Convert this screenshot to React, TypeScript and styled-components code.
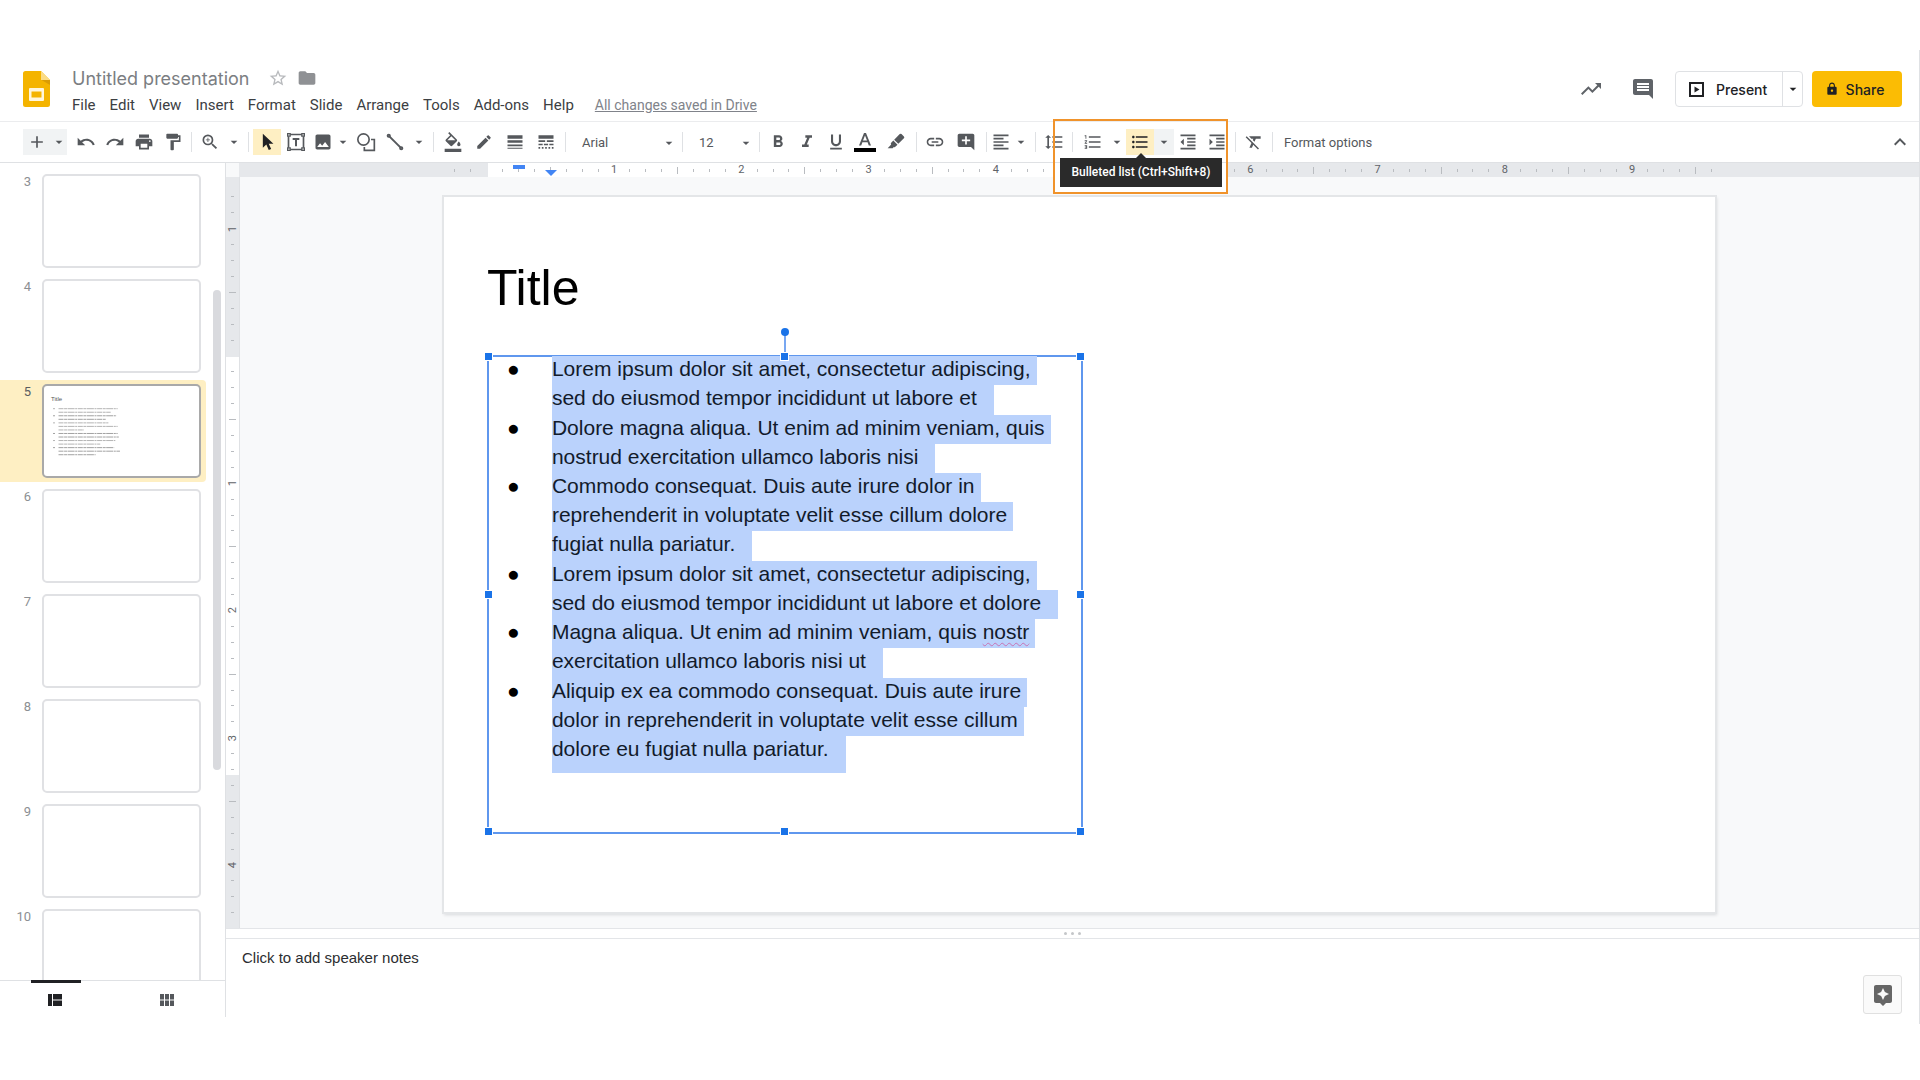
import React from "react";
import styled, { createGlobalStyle, css } from "styled-components";
import {
  MdAdd, MdUndo, MdRedo, MdPrint, MdFormatPaint, MdZoomIn, MdArrowDropDown, MdImage,
  MdFormatColorFill, MdEdit, MdLineWeight, MdLineStyle, MdFormatBold, MdFormatItalic,
  MdFormatUnderlined, MdLink, MdAddComment, MdFormatAlignLeft, MdFormatLineSpacing,
  MdFormatListNumbered, MdFormatListBulleted, MdFormatIndentDecrease, MdFormatIndentIncrease,
  MdFormatClear, MdKeyboardArrowUp, MdTrendingUp, MdComment, MdLock, MdStarBorder, MdFolder,
  MdAssistant,
} from "react-icons/md";

const ink = "#55585c";
const line = "#dfe1e4";
const rulerGray = "#e6e8eb";
const blue = "#1a73e8";
const ui = `Roboto, "Liberation Sans", sans-serif`;
const display = `Inter, Roboto, sans-serif`;

const Global = createGlobalStyle`
  *, *::before, *::after { box-sizing: border-box; }
  body { margin: 0; background: #fff; font-family: ${ui}; color: #202124; }
  button, input, select, textarea { font: inherit; color: inherit; border: 0; background: none; padding: 0; margin: 0; outline: 0; }
  button, select { cursor: pointer; }
  h1, h2, p, ul, ol { margin: 0; padding: 0; font-weight: 400; list-style: none; }
  svg { display: block; flex: none; }
`;

const Shell = styled.div`
  display: flex;
  flex-direction: column;
  height: calc(100vh - 106px);
  min-height: 640px;
  margin-top: 50px;
  border-right: 1px solid ${line};
`;

/* Header */
const Header = styled.header`
  display: flex;
  height: 72px;
  padding: 0 17px 0 23px;
  border-bottom: 1px solid #ebecee;
`;
const Logo = styled.svg`
  width: 27px;
  height: 36px;
  margin: 21px 22px 0 0;
`;
const DocInfo = styled.div`
  padding-top: 15px;
`;
const TitleRow = styled.div`
  display: flex;
  align-items: center;
  height: 26px;
  color: #8f9194;
`;
const DocTitle = styled.input`
  width: 196px;
  font-family: ${display};
  font-size: 18px;
  color: #7b7e82;
`;
const IconButton = styled.button`
  display: flex;
  margin-right: 9px;
`;
const Menu = styled.nav`
  display: flex;
  align-items: center;
  gap: 14px;
  height: 28px;
  font-size: 15px;
  color: #3c4043;
`;
const MenuItem = styled.button`
  white-space: nowrap;
`;
const SavedLink = styled.a`
  margin-left: 7px;
  font-size: 14px;
  color: #80838a;
  white-space: nowrap;
`;
const Actions = styled.div`
  display: flex;
  align-items: center;
  height: 36px;
  margin: 21px 0 0 auto;
`;
const HeaderIcon = styled.button`
  display: flex;
  margin-right: 28px;
  color: #5f6368;
`;
const PresentGroup = styled.div`
  display: flex;
  height: 36px;
  margin: 0 9px 0 -8px;
  border: 1px solid ${line};
  border-radius: 4px;
  font-family: ${display};
  font-size: 14px;
  font-weight: 500;
`;
const Present = styled.button`
  display: flex;
  align-items: center;
  gap: 12px;
  width: 106px;
  padding-left: 13px;
`;
const PresentMore = styled.button`
  display: flex;
  align-items: center;
  justify-content: center;
  width: 20px;
  border-left: 1px solid ${line};
`;
const Share = styled.button`
  display: flex;
  align-items: center;
  justify-content: center;
  gap: 7px;
  width: 90px;
  height: 36px;
  padding-right: 5px;
  border-radius: 4px;
  background: #fbbc04;
  font-family: ${display};
  font-size: 14px;
  font-weight: 500;
`;

/* Toolbar */
const Toolbar = styled.div`
  display: flex;
  align-items: center;
  height: 41px;
  flex: none;
  padding: 0 7px 0 23px;
  border-bottom: 1px solid ${line};
  color: ${ink};
`;
const Tool = styled.button<{ $w?: number; $on?: boolean }>`
  display: flex;
  align-items: center;
  justify-content: center;
  flex: none;
  width: ${(p) => p.$w ?? 28}px;
  height: 26px;
  & + & { margin-left: 1px; }
  ${(p) => p.$on && css`background: #feefc3; color: #202124;`}
`;
const Caret = styled.button<{ $w?: number; $fill?: boolean }>`
  display: flex;
  align-items: center;
  justify-content: center;
  flex: none;
  width: ${(p) => p.$w ?? 16}px;
  height: 26px;
  background: ${(p) => (p.$fill ? "#f1f3f4" : "none")};
  & + ${Tool} { margin-left: 1px; }
`;
const NewSlide = styled.div`
  display: flex;
  margin-right: 5px;
  background: #f1f3f4;
`;
const Sep = styled.span`
  flex: none;
  width: 1px;
  height: 20px;
  margin: 0 4px;
  background: ${line};
`;
const Picker = styled.div<{ $w: number }>`
  position: relative;
  flex: none;
  width: ${(p) => p.$w}px;
  svg { position: absolute; right: 1px; top: 6px; pointer-events: none; }
`;
const PickerSelect = styled.select`
  appearance: none;
  width: 100%;
  height: 26px;
  padding-left: 12px;
  font-size: 13px;
`;
const FormatOptions = styled.button`
  padding-left: 7px;
  font-size: 13px;
  white-space: nowrap;
`;
const Collapse = styled.button`
  display: flex;
  margin-left: auto;
`;
const BulletTool = styled.div`
  position: relative;
  display: flex;
  margin-left: 1px;
`;
const Callout = styled.div`
  position: absolute;
  z-index: 5;
  left: -73px;
  top: -10px;
  width: 175px;
  height: 75px;
  padding: 37px 4px 0 5px;
  border: 2px solid #f0932b;
  background: linear-gradient(transparent 42px, #fff 42px);
  pointer-events: none;
`;
const Tooltip = styled.div`
  position: relative;
  height: 29px;
  background: #2a2a2a;
  color: #fff;
  font-size: 12px;
  font-weight: 500;
  line-height: 29px;
  text-align: center;
  white-space: nowrap;
  &::before {
    content: "";
    position: absolute;
    left: 50%;
    top: -5px;
    margin-left: -5px;
    border: 5px solid transparent;
    border-top: 0;
    border-bottom-color: #2a2a2a;
  }
`;

/* Body */
const Body = styled.div`
  display: flex;
  flex: 1;
  min-height: 0;
`;
const Side = styled.aside`
  display: flex;
  flex-direction: column;
  position: relative;
  flex: none;
  width: 226px;
  margin-bottom: 7px;
  border-right: 1px solid ${line};
`;
const Film = styled.ol`
  flex: 1;
  min-height: 0;
  padding-top: 7px;
  overflow: hidden;
`;
const FilmItem = styled.li<{ $on?: boolean }>`
  display: flex;
  gap: 11px;
  width: 206px;
  margin-bottom: 3px;
  padding: 4px 5px 4px 0;
  background: ${(p) => (p.$on ? "#feefc3" : "none")};
  border-radius: 0 4px 4px 0;
  color: ${(p) => (p.$on ? "#5a5c60" : "#8c8f93")};
`;
const FilmNumber = styled.span`
  width: 31px;
  font-size: 13px;
  line-height: 15px;
  text-align: right;
`;
const Thumb = styled.button<{ $on?: boolean }>`
  flex: 1;
  height: 94px;
  border: 2px solid ${(p) => (p.$on ? "#a9a9a9" : "#e0e1e4")};
  border-radius: 5px;
  background: #fff;
  overflow: hidden;
`;
const ScrollThumb = styled.div`
  position: absolute;
  right: 4px;
  top: 127px;
  width: 8px;
  height: 480px;
  border-radius: 4px;
  background: #d9dade;
`;
const Views = styled.div`
  display: flex;
  height: 37px;
  padding-right: 1px;
  border-top: 1px solid ${line};
`;
const ViewButton = styled.button<{ $on?: boolean }>`
  display: flex;
  align-items: center;
  justify-content: center;
  flex: 1;
  padding: 2px 3px 0 0;
  color: ${(p) => (p.$on ? "#202124" : ink)};
  position: relative;
  ${(p) => p.$on && css`
    &::before {
      content: "";
      position: absolute;
      top: -1px;
      left: 50%;
      width: 50px;
      height: 3px;
      margin-left: -25px;
      background: #202124;
    }
  `}
`;
const Main = styled.main`
  display: flex;
  flex-direction: column;
  flex: 1;
  min-width: 0;
`;
const HRuler = styled.div`
  display: flex;
  flex: none;
  height: 14px;
  background: linear-gradient(90deg, #f8f9fa 13px, ${rulerGray} 13px 262px, #fff 262px 854px, ${rulerGray} 854px);
`;
const HMarks = styled.div`
  position: relative;
  display: flex;
  flex: 1;
  margin: 0 199px 0 221px;
`;
const HCell = styled.span`
  display: flex;
  flex: 1 1 0;
  width: 0;
  align-items: center;
  justify-content: center;
  font-size: 11px;
  line-height: 14px;
  color: #5f6368;
`;
const HTick = styled.i<{ $tall?: boolean }>`
  width: 1px;
  height: ${(p) => (p.$tall ? 7 : 3)}px;
  background: #b9bcc0;
`;
const FirstLine = styled.i`
  position: absolute;
  left: 66px;
  top: 2px;
  width: 12px;
  height: 4px;
  background: #4285f4;
`;
const LeftIndent = styled.i`
  position: absolute;
  left: 98px;
  top: 7px;
  border: 6px solid transparent;
  border-bottom: 0;
  border-top-color: #4285f4;
`;
const Stage = styled.div`
  display: flex;
  flex: 1;
  min-height: 0;
`;
const VRuler = styled.div`
  display: flex;
  flex-direction: column;
  flex: none;
  width: 14px;
  padding: 12px 0 7px;
  border-right: 1px solid ${line};
  background: linear-gradient(${rulerGray} 180px, #fff 180px 598px, ${rulerGray} 598px);
`;
const VCell = styled.span`
  display: flex;
  flex: 1 1 0;
  height: 0;
  align-items: center;
  justify-content: center;
  font-size: 11px;
  line-height: 13px;
  color: #5f6368;
`;
const VTick = styled.i<{ $tall?: boolean }>`
  height: 1px;
  width: ${(p) => (p.$tall ? 7 : 3)}px;
  background: #b9bcc0;
`;
const VNumber = styled.span`
  writing-mode: vertical-rl;
  transform: rotate(180deg);
`;
const Canvas = styled.div`
  display: flex;
  justify-content: center;
  flex: 1;
  min-width: 0;
  padding: 20px 0 16px;
  background: #f8f9fa;
`;
const Slide = styled.section`
  height: 100%;
  aspect-ratio: 16 / 9;
  padding: 63px 0 0 43px;
  background: #fff;
  box-shadow: 0 0 0 2px #e4e6e8, 1px 2px 3px 1px #d8dadd;
  font-family: "Liberation Sans", Arial, sans-serif;
  color: #000;
`;
const SlideTitle = styled.h1`
  font-size: 50px;
  line-height: 56px;
`;
const TextFrame = styled.div`
  position: relative;
  width: 596px;
  height: 479px;
  margin-top: 39px;
  border: 2px solid #5f97ee;
`;
const Handle = styled.i<{ $x: number; $y: number }>`
  position: absolute;
  left: ${(p) => p.$x}%;
  top: ${(p) => p.$y}%;
  width: 9px;
  height: 9px;
  margin: -5px 0 0 -5px;
  border: 1px solid #fff;
  background: ${blue};
`;
const RotateStem = styled.i`
  position: absolute;
  left: 50%;
  top: -26px;
  width: 2px;
  height: 22px;
  margin-left: -1px;
  background: #78a7f1;
  &::before {
    content: "";
    position: absolute;
    left: -3px;
    top: -3px;
    width: 8px;
    height: 8px;
    border-radius: 50%;
    background: ${blue};
  }
`;
const Bullets = styled.ul`
  margin-top: -1px;
  font-size: 21px;
  line-height: 25px;
`;
const Bullet = styled.li`
  display: flex;
  &::before {
    content: "●";
    width: 63px;
    padding-left: 18px;
  }
`;
const Line = styled.span<{ $end?: boolean }>`
  display: block;
  width: fit-content;
  padding: 0 ${(p) => (p.$end ? 17 : 6)}px 4px 0;
  background: #bad2fc;
  color: #121b2b;
  white-space: nowrap;
  ${Bullet}:nth-child(odd) &:last-child { padding-bottom: 5px; }
  ${Bullet}:last-child &:last-child { padding-bottom: 12px; }
`;
const Typo = styled.span`
  text-decoration: underline wavy #c873b4 1px;
  text-underline-offset: 3px;
`;
const Splitter = styled.div`
  display: flex;
  align-items: center;
  justify-content: center;
  gap: 4px;
  flex: none;
  height: 11px;
  border: solid #e3e5e8;
  border-width: 1px 0;
`;
const Dot = styled.i`
  width: 3px;
  height: 3px;
  border-radius: 50%;
  background: #c4c6c9;
`;
const NotesArea = styled.div`
  display: flex;
  align-items: flex-start;
  flex: none;
  height: 85px;
  padding: 0 17px 0 16px;
`;
const Notes = styled.textarea`
  flex: 1;
  height: 60px;
  padding-top: 9px;
  resize: none;
  font-family: "Liberation Sans", Arial, sans-serif;
  font-size: 15px;
  line-height: 20px;
  &::placeholder { color: #2b2d30; opacity: 1; }
`;
const Explore = styled.button`
  display: flex;
  align-items: center;
  justify-content: center;
  width: 39px;
  height: 39px;
  margin-top: 36px;
  border: 1px solid #e0e0e0;
  border-radius: 3px;
  background: #fafafa;
  color: #666;
`;

const I = 20;
const Arrow = () => <MdArrowDropDown size={16} />;

const Stroke = ({ children }: { children: React.ReactNode }) => (
  <svg width={I} height={I} viewBox="0 0 24 24" fill="none" stroke="currentColor" strokeWidth="2">{children}</svg>
);
const PointerIcon = () => (
  <svg width={I} height={I} viewBox="0 0 24 24" fill="currentColor"><path d="M7 2v17l4.2-3.9 2.9 6.5 2.9-1.3-2.9-6.3h5.6z" /></svg>
);
const TextBoxIcon = () => (
  <Stroke>
    <path d="M5 3h14M5 21h14M3 5v14M21 5v14" />
    <path d="M2 2h3v3H2zM19 2h3v3h-3zM2 19h3v3H2zM19 19h3v3h-3z" strokeWidth="1.6" />
    <path d="M8 8.5h8M12 8.5V17" strokeWidth="2.4" />
  </Stroke>
);
const ShapeIcon = () => (
  <Stroke><circle cx="9" cy="9" r="6.8" /><path d="M18 9h4v13H10v-4" /></Stroke>
);
const LineIcon = () => (
  <Stroke><path d="M4 4l16 16" strokeWidth="2.4" /><circle cx="4.5" cy="4.5" r="1.5" /><circle cx="19.5" cy="19.5" r="1.5" /></Stroke>
);
const MarkerIcon = () => (
  <svg width={I} height={I} viewBox="0 0 24 24" fill="currentColor">
    <path d="M16.5 2.5 9.800 9.200l5 5 6.700-6.700a1.500 1.500 0 0 0 0-2.100l-2.900-2.900a1.500 1.500 0 0 0-2.100 0zM8.800 10.200l-2.600 2.600a1.500 1.500 0 0 0 0 2.100L2 19.500h6l1.300-1.400a1.500 1.500 0 0 0 1.900-.3l2.600-2.600z" />
  </svg>
);
const TextColorIcon = () => (
  <svg width="22" height="24" viewBox="0 0 22 24">
    <path fill="currentColor" d="M10 3h2l5 12.500h-2.200l-1.200-3.200H8.400l-1.200 3.200H5zM11 5.500l-2 5.100h4z" />
    <path fill="#000" d="M0 18h22v4H0z" />
  </svg>
);
const PlayBoxIcon = () => (
  <svg width="15" height="15" viewBox="0 0 15 15"><path d="M1 1h13v13H1z" fill="none" stroke="currentColor" strokeWidth="2" /><path d="M5.500 4.500v6l5-3z" fill="currentColor" /></svg>
);
const FilmIcon = () => (
  <svg width="14" height="12" viewBox="0 0 14 12" fill="currentColor"><path d="M0 0h4v12H0zM5 0h9v5.500H5zM5 6.500h9V12H5z" /></svg>
);
const GridIcon = () => (
  <svg width="14" height="12" viewBox="0 0 14 12" fill="currentColor"><path d="M0 0h4v5.500H0zM5 0h4v5.500H5zM10 0h4v5.500h-4zM0 6.500h4V12H0zM5 6.500h4V12H5zM10 6.500h4V12h-4z" /></svg>
);

const paragraphs: string[][] = [
  ["Lorem ipsum dolor sit amet, consectetur adipiscing,", "sed do eiusmod tempor incididunt ut labore et"],
  ["Dolore magna aliqua. Ut enim ad minim veniam, quis", "nostrud exercitation ullamco laboris nisi"],
  ["Commodo consequat. Duis aute irure dolor in", "reprehenderit in voluptate velit esse cillum dolore", "fugiat nulla pariatur."],
  ["Lorem ipsum dolor sit amet, consectetur adipiscing,", "sed do eiusmod tempor incididunt ut labore et dolore"],
  ["Magna aliqua. Ut enim ad minim veniam, quis nostr", "exercitation ullamco laboris nisi ut"],
  ["Aliquip ex ea commodo consequat. Duis aute irure", "dolor in reprehenderit in voluptate velit esse cillum", "dolore eu fugiat nulla pariatur."],
];

const MiniSlide = () => {
  let row = 0;
  return (
    <svg width="155" height="90" viewBox="0 0 155 90">
      <text x="7" y="15" fontSize="6" fill="#555" fontFamily="Liberation Sans, sans-serif">Title</text>
      {paragraphs.map((lines, p) =>
        lines.map((text, i) => {
          const y = 22.7 + row++ * 3.54;
          return (
            <g key={`${p}-${i}`} stroke={p % 2 ? "#a2a2a2" : "#b4b4b4"} strokeWidth="1">
              {i === 0 && <path d={`M9 ${y}h2`} />}
              <path d={`M14.5 ${y}h${text.length * 1.16}`} strokeDasharray="5 .6 3 .5 7 .6 2 .6" />
            </g>
          );
        }),
      )}
    </svg>
  );
};

const menus = ["File", "Edit", "View", "Insert", "Format", "Slide", "Arrange", "Tools", "Add-ons", "Help"];
const range = (from: number, to: number) => Array.from({ length: to - from + 1 }, (_, i) => from + i);
const handles = [[0, 0], [50, 0], [100, 0], [0, 50], [100, 50], [0, 100], [50, 100], [100, 100]];

/* The ruler has eight marks to the inch; the list tooltip lies over the fifth inch. */
const coveredMark = 40;
const rulerMark = (k: number) => {
  if (k === 0 || k === coveredMark) return null;
  if (k > 0 && k % 8 === 0) return k / 8;
  return <HTick $tall={k % 4 === 0} />;
};

export default function App() {
  return (
    <>
      <Global />
      <Shell>
        <Header>
          <Logo viewBox="0 0 27 36">
            <path fill="#f4b400" d="M2.500 0H18l9 9v24.500a2.500 2.500 0 0 1-2.500 2.500h-22A2.500 2.500 0 0 1 0 33.500v-31A2.500 2.500 0 0 1 2.500 0z" />
            <path fill="#fbdc86" d="M18 0l9 9h-9z" />
            <path fill="#d99c05" d="M18.500 9H27v5z" />
            <path fill="#fff6dc" fillRule="evenodd" d="M7 17h13a1 1 0 0 1 1 1v11a1 1 0 0 1-1 1H7a1 1 0 0 1-1-1V18a1 1 0 0 1 1-1zm1.500 3.500v6h10v-6z" />
          </Logo>
          <DocInfo>
            <TitleRow>
              <DocTitle aria-label="Document title" defaultValue="Untitled presentation" />
              <IconButton aria-label="Star"><MdStarBorder size={20} color="#b8babd" /></IconButton>
              <IconButton aria-label="Move"><MdFolder size={20} /></IconButton>
            </TitleRow>
            <Menu>
              {menus.map((m) => <MenuItem key={m}>{m}</MenuItem>)}
              <SavedLink href="#saved">All changes saved in Drive</SavedLink>
            </Menu>
          </DocInfo>
          <Actions>
            <HeaderIcon aria-label="Activity"><MdTrendingUp size={24} /></HeaderIcon>
            <HeaderIcon aria-label="Comments"><MdComment size={24} /></HeaderIcon>
            <PresentGroup>
              <Present><PlayBoxIcon />Present</Present>
              <PresentMore aria-label="Present options"><Arrow /></PresentMore>
            </PresentGroup>
            <Share><MdLock size={14} />Share</Share>
          </Actions>
        </Header>

        <Toolbar role="toolbar">
          <NewSlide>
            <Tool aria-label="New slide"><MdAdd size={I} /></Tool>
            <Caret aria-label="Layouts"><Arrow /></Caret>
          </NewSlide>
          <Tool aria-label="Undo"><MdUndo size={I} /></Tool>
          <Tool aria-label="Redo"><MdRedo size={I} /></Tool>
          <Tool aria-label="Print"><MdPrint size={I} /></Tool>
          <Tool aria-label="Paint format"><MdFormatPaint size={I} /></Tool>
          <Sep />
          <Tool aria-label="Zoom"><MdZoomIn size={I} /></Tool>
          <Caret $w={20} aria-label="Zoom levels"><Arrow /></Caret>
          <Sep />
          <Tool $on aria-label="Select"><PointerIcon /></Tool>
          <Tool aria-label="Text box"><TextBoxIcon /></Tool>
          <Tool $w={24} aria-label="Image"><MdImage size={I} /></Tool>
          <Caret aria-label="Image sources"><Arrow /></Caret>
          <Tool aria-label="Shape"><ShapeIcon /></Tool>
          <Tool aria-label="Line"><LineIcon /></Tool>
          <Caret $w={20} aria-label="Line types"><Arrow /></Caret>
          <Sep />
          <Tool $w={30} aria-label="Fill color"><MdFormatColorFill size={I} /></Tool>
          <Tool $w={30} aria-label="Border color"><MdEdit size={18} /></Tool>
          <Tool $w={30} aria-label="Border weight"><MdLineWeight size={I} /></Tool>
          <Tool $w={30} aria-label="Border dash"><MdLineStyle size={I} /></Tool>
          <Sep />
          <Picker $w={108}>
            <PickerSelect aria-label="Font"><option>Arial</option></PickerSelect>
            <Arrow />
          </Picker>
          <Sep />
          <Picker $w={68}>
            <PickerSelect aria-label="Font size"><option>12</option></PickerSelect>
            <Arrow />
          </Picker>
          <Sep />
          <Tool aria-label="Bold"><MdFormatBold size={I} /></Tool>
          <Tool aria-label="Italic"><MdFormatItalic size={I} /></Tool>
          <Tool aria-label="Underline"><MdFormatUnderlined size={I} /></Tool>
          <Tool aria-label="Text color"><TextColorIcon /></Tool>
          <Tool $w={32} aria-label="Highlight color"><MarkerIcon /></Tool>
          <Sep />
          <Tool aria-label="Insert link"><MdLink size={I} /></Tool>
          <Tool $w={32} aria-label="Add comment"><MdAddComment size={I} /></Tool>
          <Sep />
          <Tool $w={20} aria-label="Align"><MdFormatAlignLeft size={I} /></Tool>
          <Caret $w={20} aria-label="Align options"><Arrow /></Caret>
          <Sep />
          <Tool aria-label="Line spacing"><MdFormatLineSpacing size={I} /></Tool>
          <Sep />
          <Tool $w={32} aria-label="Numbered list"><MdFormatListNumbered size={I} /></Tool>
          <Caret aria-label="Numbered list options"><Arrow /></Caret>
          <BulletTool>
            <Tool $on aria-label="Bulleted list"><MdFormatListBulleted size={I} /></Tool>
            <Caret $w={20} $fill aria-label="Bulleted list options"><Arrow /></Caret>
            <Callout><Tooltip role="tooltip">Bulleted list (Ctrl+Shift+8)</Tooltip></Callout>
          </BulletTool>
          <Tool aria-label="Decrease indent"><MdFormatIndentDecrease size={I} /></Tool>
          <Tool aria-label="Increase indent"><MdFormatIndentIncrease size={I} /></Tool>
          <Sep />
          <Tool aria-label="Clear formatting"><MdFormatClear size={I} /></Tool>
          <Sep />
          <FormatOptions>Format options</FormatOptions>
          <Collapse aria-label="Hide the menus"><MdKeyboardArrowUp size={24} /></Collapse>
        </Toolbar>

        <Body>
          <Side>
            <Film>
              {range(3, 10).map((n) => (
                <FilmItem key={n} $on={n === 5}>
                  <FilmNumber>{n}</FilmNumber>
                  <Thumb $on={n === 5} aria-label={`Slide ${n}`}>{n === 5 && <MiniSlide />}</Thumb>
                </FilmItem>
              ))}
            </Film>
            <ScrollThumb />
            <Views>
              <ViewButton $on aria-label="Filmstrip view"><FilmIcon /></ViewButton>
              <ViewButton aria-label="Grid view"><GridIcon /></ViewButton>
            </Views>
          </Side>
          <Main>
            <HRuler>
              <HMarks>
                {range(-2, 77).map((k) => <HCell key={k}>{rulerMark(k)}</HCell>)}
                <FirstLine />
                <LeftIndent />
              </HMarks>
            </HRuler>
            <Stage>
              <VRuler>
                {range(-10, 35).map((k) => (
                  <VCell key={k}>
                    {k !== 0 && k % 8 === 0 ? <VNumber>{Math.abs(k / 8)}</VNumber> : k !== 0 && <VTick $tall={k % 4 === 0} />}
                  </VCell>
                ))}
              </VRuler>
              <Canvas>
                <Slide>
                  <SlideTitle>Title</SlideTitle>
                  <TextFrame>
                    <Bullets>
                      {paragraphs.map((lines, p) => (
                        <Bullet key={p}>
                          <div>
                            {lines.map((text, i) => (
                              <Line key={i} $end={i === lines.length - 1}>
                                {text.endsWith(" nostr") ? <>{text.slice(0, -5)}<Typo>nostr</Typo></> : text}
                              </Line>
                            ))}
                          </div>
                        </Bullet>
                      ))}
                    </Bullets>
                    <RotateStem />
                    {handles.map(([x, y]) => <Handle key={`${x}-${y}`} $x={x} $y={y} />)}
                  </TextFrame>
                </Slide>
              </Canvas>
            </Stage>
            <Splitter><Dot /><Dot /><Dot /></Splitter>
            <NotesArea>
              <Notes aria-label="Speaker notes" placeholder="Click to add speaker notes" />
              <Explore aria-label="Explore"><MdAssistant size={24} /></Explore>
            </NotesArea>
          </Main>
        </Body>
      </Shell>
    </>
  );
}
